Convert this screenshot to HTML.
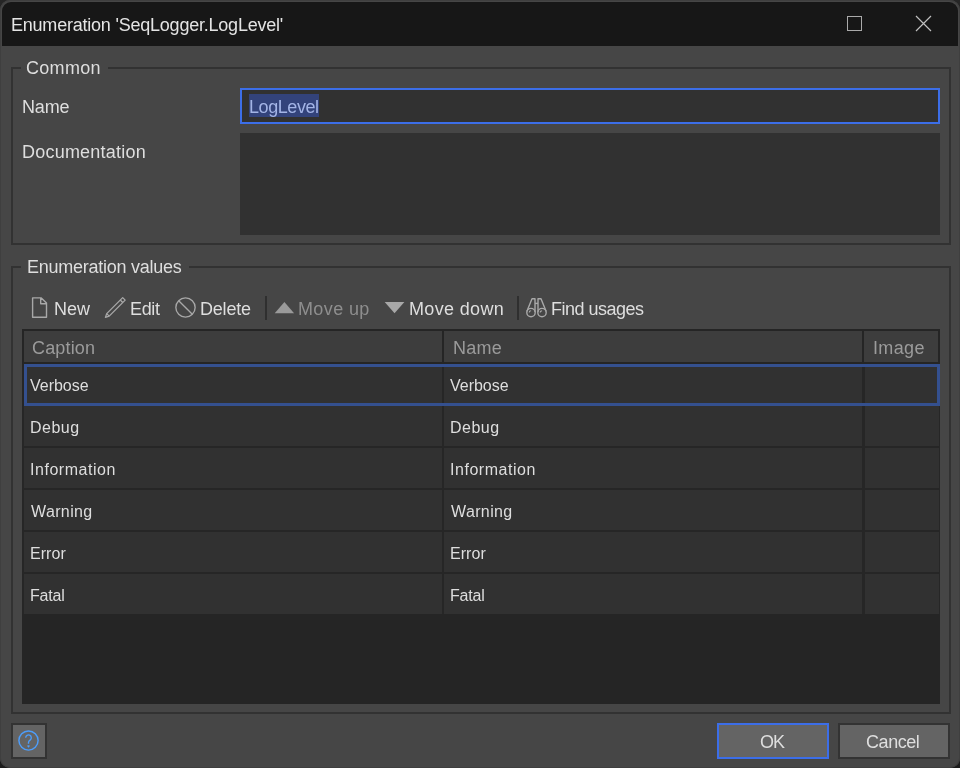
<!DOCTYPE html>
<html lang="en">
<head>
<meta charset="utf-8">
<title>Enumeration 'SeqLogger.LogLevel'</title>
<style>
html,body{margin:0;padding:0;}
body{width:960px;height:768px;overflow:hidden;position:relative;
  background:linear-gradient(#262626,#262626 384px,#1c1c1c 384px,#1c1c1c);
  font-family:"Liberation Sans",sans-serif;color:#dedede;}
*{box-sizing:border-box;}
.abs{position:absolute;}
#win{left:0;top:0;width:960px;height:768px;background:#464646;border-radius:10px;overflow:hidden;box-shadow:inset 0 0 0 1px #3f3f3f;}
#title{left:2px;top:2px;width:956px;height:44px;background:#171717;border-radius:9px 9px 0 0;}
.t{position:absolute;white-space:nowrap;will-change:transform;font-size:18px;line-height:20px;height:20px;color:#dedede;}
.t16{font-size:16px;}
.grp{border:2px solid #323232;}
.leg{background:#464646;}
.dark{background:#313131;}
</style>
</head>
<body>
<div id="win" class="abs">
  <div id="title" class="abs"></div>
  <span class="t" id="tt" style="left:11px;top:15px;letter-spacing:-0.22px;color:#e4e4e4;">Enumeration 'SeqLogger.LogLevel'</span>
  <!-- window buttons -->
  <svg class="abs" style="left:840px;top:10px" width="100" height="28" viewBox="0 0 100 28">
    <rect x="7.5" y="6.5" width="14" height="14" fill="none" stroke="#aaaaaa" stroke-width="1"/>
    <path d="M76 6 L91 21 M91 6 L76 21" stroke="#c0c0c0" stroke-width="1.2" fill="none"/>
  </svg>

  <!-- Common group -->
  <div class="abs grp" style="left:11px;top:67px;width:940px;height:178px;"></div>
  <div class="abs leg" style="left:21px;top:66px;width:87px;height:4px;"></div>
  <span class="t" id="lcommon" style="left:26.2px;top:58px;letter-spacing:0.3px;">Common</span>
  <span class="t" id="lname" style="left:21.5px;top:97px;letter-spacing:-0.17px;">Name</span>
  <div class="abs dark" style="left:240px;top:88px;width:700px;height:36px;border:2px solid #3c6ee8;"></div>
  <div class="abs" style="left:249px;top:94px;width:70px;height:23px;background:#33437b;"></div>
  <span class="t" id="lval" style="left:249px;top:97px;letter-spacing:-0.43px;color:#a3b4e6;">LogLevel</span>
  <span class="t" id="ldoc" style="left:21.7px;top:142px;letter-spacing:0.22px;">Documentation</span>
  <div class="abs dark" style="left:240px;top:133px;width:700px;height:102px;"></div>

  <!-- Enumeration values group -->
  <div class="abs grp" style="left:11px;top:266px;width:940px;height:448px;"></div>
  <div class="abs leg" style="left:21px;top:265px;width:168px;height:4px;"></div>
  <span class="t" id="lenum" style="left:26.7px;top:257px;letter-spacing:-0.25px;">Enumeration values</span>

  <!-- toolbar -->
  <svg class="abs" style="left:28px;top:294px" width="540" height="28" viewBox="0 0 540 28" fill="none">
    <!-- new page -->
    <path d="M4.6 3.9 H13.3 L18.5 9.1 V23.3 H4.6 Z M12.7 3.9 V9.7 H18.5" stroke="#a8a8a8" stroke-width="1.4" stroke-linejoin="round"/>
    <!-- pencil -->
    <g transform="translate(77.4 23.4) rotate(-45)" stroke="#a8a8a8" stroke-width="1.3" stroke-linejoin="round">
      <path d="M0 0 L3.6 -1.75 H26.2 V1.75 H3.6 Z"/>
      <path d="M3.6 -1.75 V1.75 M22.8 -1.75 V1.75"/>
    </g>
    <!-- no sign -->
    <circle cx="157.5" cy="13.5" r="9.65" stroke="#a8a8a8" stroke-width="1.35"/>
    <path d="M150.7 6.7 L164.3 20.3" stroke="#a8a8a8" stroke-width="1.35"/>
    <!-- separators -->
    <rect x="237" y="2" width="2" height="24" fill="#2f2f2f"/>
    <rect x="489" y="2" width="2" height="24" fill="#2f2f2f"/>
    <!-- triangles -->
    <path d="M246.7 19.3 L256.4 8 L266.1 19.3 Z" fill="#9a9a9a"/>
    <path d="M356.7 8 L376.4 8 L366.55 19.3 Z" fill="#a8a8a8"/>
    <!-- binoculars -->
    <g stroke="#a8a8a8" stroke-width="1.4" stroke-linejoin="round">
      <circle cx="503" cy="18.6" r="4.2"/>
      <circle cx="514" cy="18.6" r="4.2"/>
      <path d="M498.8 17.4 L504 4.7 H507 V18"/>
      <path d="M518.2 17.4 L513 4.7 H510 V18"/>
      <path d="M507 9.4 H510"/>
      <path d="M501.2 18.6 A1.9 1.9 0 0 1 503.1 16.7" stroke-width="1.1"/>
      <path d="M512.2 18.6 A1.9 1.9 0 0 1 514.1 16.7" stroke-width="1.1"/>
    </g>
  </svg>
  <span class="t" id="bnew" style="left:53.6px;top:299px;letter-spacing:0px;">New</span>
  <span class="t" id="bedit" style="left:130px;top:299px;letter-spacing:-0.33px;">Edit</span>
  <span class="t" id="bdel" style="left:200px;top:299px;letter-spacing:-0.2px;">Delete</span>
  <span class="t" id="bup" style="left:298.2px;top:299px;letter-spacing:0.38px;color:#8e8e8e;">Move up</span>
  <span class="t" id="bdown" style="left:408.8px;top:299px;letter-spacing:0.34px;">Move down</span>
  <span class="t" id="bfind" style="left:551.2px;top:299px;letter-spacing:-0.5px;">Find usages</span>

  <!-- grid -->
  <div class="abs" id="grid" style="left:22px;top:329px;width:918px;height:375px;background:#252525;">
    <!-- header -->
    <div class="abs" style="left:2px;top:2px;width:418px;height:31px;background:#3d3d3d;"></div>
    <div class="abs" style="left:422px;top:2px;width:418px;height:31px;background:#3d3d3d;"></div>
    <div class="abs" style="left:842px;top:2px;width:74px;height:31px;background:#3d3d3d;"></div>
    <!-- rows -->
    <div class="abs" style="left:0;top:35px;width:918px;height:250px;background:#262626;"></div>
  </div>
  <!-- rows -->
  <div class="abs" style="left:24px;top:364px;width:915px;height:40px;background:#313131;"></div>
  <span class="t t16 rc1" style="left:30.3px;top:376px;letter-spacing:-0.03px;">Verbose</span>
  <span class="t t16 rc2" style="left:450.3px;top:376px;letter-spacing:-0.03px;">Verbose</span>
  <div class="abs" style="left:24px;top:406px;width:915px;height:40px;background:#313131;"></div>
  <span class="t t16 rc1" style="left:29.6px;top:418px;letter-spacing:0.47px;">Debug</span>
  <span class="t t16 rc2" style="left:449.6px;top:418px;letter-spacing:0.47px;">Debug</span>
  <div class="abs" style="left:24px;top:448px;width:915px;height:40px;background:#313131;"></div>
  <span class="t t16 rc1" style="left:29.6px;top:460px;letter-spacing:0.54px;">Information</span>
  <span class="t t16 rc2" style="left:449.6px;top:460px;letter-spacing:0.54px;">Information</span>
  <div class="abs" style="left:24px;top:490px;width:915px;height:40px;background:#313131;"></div>
  <span class="t t16 rc1" style="left:30.5px;top:502px;letter-spacing:0.38px;">Warning</span>
  <span class="t t16 rc2" style="left:450.5px;top:502px;letter-spacing:0.38px;">Warning</span>
  <div class="abs" style="left:24px;top:532px;width:915px;height:40px;background:#313131;"></div>
  <span class="t t16 rc1" style="left:29.5px;top:544px;letter-spacing:0.05px;">Error</span>
  <span class="t t16 rc2" style="left:449.5px;top:544px;letter-spacing:0.05px;">Error</span>
  <div class="abs" style="left:24px;top:574px;width:915px;height:40px;background:#313131;"></div>
  <span class="t t16 rc1" style="left:29.5px;top:586px;letter-spacing:-0.2px;">Fatal</span>
  <span class="t t16 rc2" style="left:449.5px;top:586px;letter-spacing:-0.2px;">Fatal</span>
  <div class="abs" style="left:442px;top:364px;width:2px;height:250px;background:#262626;"></div>
  <div class="abs" style="left:862px;top:364px;width:3px;height:250px;background:#262626;"></div>
  <div class="abs" style="left:24px;top:364px;width:916px;height:42px;border:3px solid #34508f;"></div>
  <span class="t" id="hcap" style="left:32.4px;top:338px;letter-spacing:0.17px;color:#9b9b9b;">Caption</span>
  <span class="t" id="hname" style="left:452.5px;top:338px;letter-spacing:0.23px;color:#9b9b9b;">Name</span>
  <span class="t" id="himg" style="left:872.6px;top:338px;letter-spacing:0.35px;color:#9b9b9b;">Image</span>

  <!-- bottom buttons -->
  <div class="abs" style="left:11px;top:723px;width:36px;height:36px;background:#646464;border:2px solid #333;"></div>
  <svg class="abs" style="left:11px;top:723px" width="36" height="36" viewBox="0 0 36 36" fill="none">
    <circle cx="17.5" cy="17.5" r="9.6" stroke="#4d9dfa" stroke-width="1.45"/>
    <path d="M14.7 14.7 A2.8 2.8 0 1 1 19.3 16.9 Q17.5 18 17.5 19.4 V20.8" stroke="#4d9dfa" stroke-width="1.35"/>
    <path d="M16.2 22.6 Q17.5 22 18.8 22.6 Q18.9 23.6 17.5 24.8 Q16.1 23.6 16.2 22.6 Z" fill="#4d9dfa"/>
  </svg>
  <div class="abs" style="left:717px;top:723px;width:112px;height:36px;background:#646464;border:2px solid #3c6ee8;"></div>
  <span class="t" id="bok" style="left:760.2px;top:732px;letter-spacing:-0.9px;">OK</span>
  <div class="abs" style="left:838px;top:723px;width:112px;height:36px;background:#646464;border:2px solid #333;"></div>
  <span class="t" id="bcancel" style="left:866.2px;top:732px;letter-spacing:-0.44px;">Cancel</span>
</div>
</body>
</html>
